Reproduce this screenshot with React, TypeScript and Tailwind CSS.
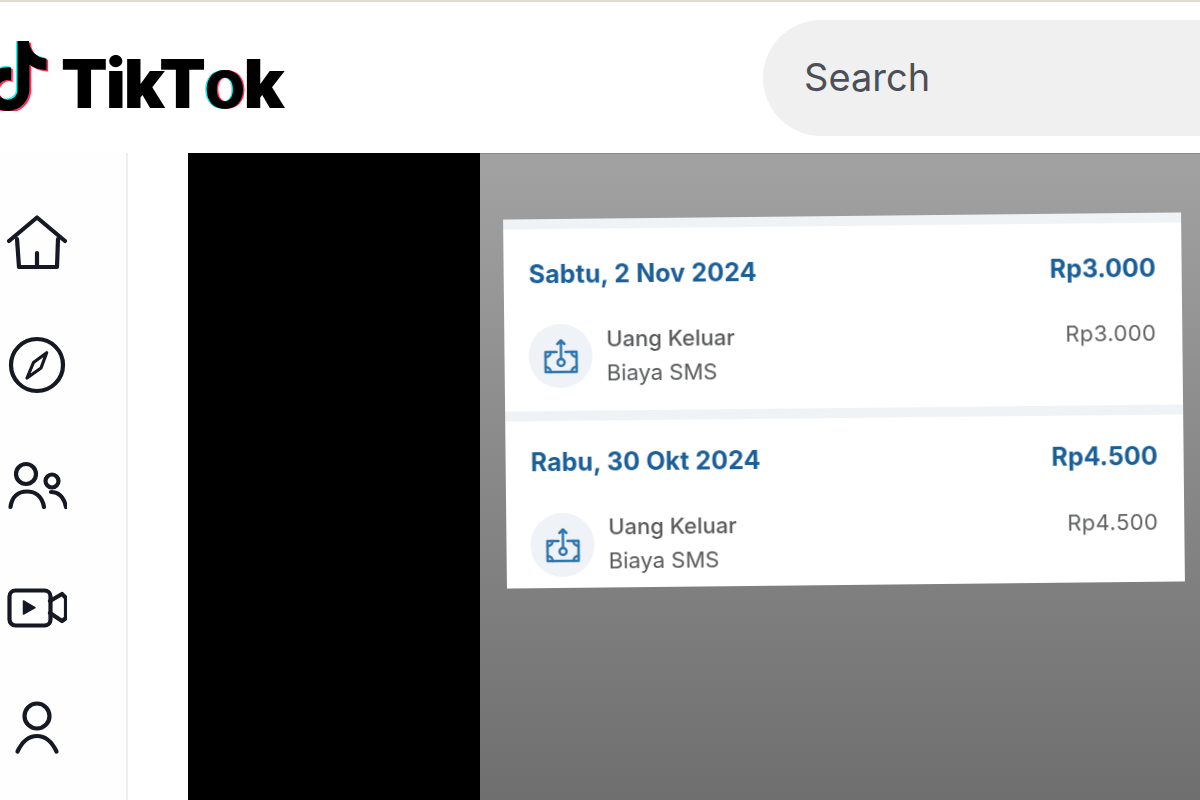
const notePath =
  'M12.525.02c1.31-.02 2.61-.01 3.91-.02.08 1.53.63 3.09 1.75 4.17 1.12 1.11 2.7 1.62 4.24 1.79v4.03c-1.44-.05-2.89-.35-4.2-.97-.57-.26-1.1-.59-1.62-.93-.01 2.92.01 5.84-.02 8.75-.08 1.4-.54 2.79-1.35 3.94-1.31 1.92-3.58 3.17-5.91 3.21-1.43.08-2.86-.31-4.08-1.03-2.02-1.19-3.44-3.37-3.65-5.71-.02-.5-.03-1-.01-1.49.18-1.9 1.12-3.72 2.58-4.96 1.66-1.44 3.98-2.13 6.15-1.72.02 1.48-.04 2.96-.04 4.44-.99-.32-2.15-.23-3.02.37-.63.41-1.11 1.04-1.36 1.75-.21.51-.15 1.07-.14 1.61.24 1.64 1.82 3.02 3.5 2.87 1.12-.01 2.19-.66 2.77-1.61.19-.33.4-.67.41-1.06.1-1.79.06-3.57.07-5.36.01-4.03-.01-8.05.02-12.07z';

function Logo() {
  return (
    <div className="flex items-center h-[149px] blur-[0.5px]">
      <svg className="w-[70px] h-[70px] -ml-[19px] -mt-[1px] shrink-0" viewBox="0 0 24 24">
        <path d={notePath} fill="#25f4ee" transform="translate(-0.5 -0.4)" />
        <path d={notePath} fill="#fe2c55" transform="translate(0.6 0.5)" />
        <path d={notePath} fill="#000000" />
      </svg>
      <span className="ml-[10px] mt-[13px] font-black text-[68px] leading-none tracking-[-2px] text-black">
        TikT
        <span className="font-bold [text-shadow:1.5px_0_0_#fe2c55,-1.5px_0_0_#25f4ee]">o</span>k
      </span>
    </div>
  );
}

function NavIcon({ children }: { children: React.ReactNode }) {
  return (
    <div className="h-[121px] flex items-center pl-[7px]">
      <svg
        className="w-[60px] h-[60px]"
        viewBox="0 0 60 60"
        fill="none"
        stroke="#161823"
        strokeWidth={4.2}
        strokeLinecap="round"
        strokeLinejoin="round"
      >
        {children}
      </svg>
    </div>
  );
}

function Sidebar() {
  return (
    <div className="w-[128px] shrink-0 border-r-2 border-[#eeeeee] pt-[30px] bg-[#fefefe]">
      <NavIcon>
        <path d="M2 27 30 3.5 58 27" />
        <path d="M10 25 12 53H50L51 25" />
        <path d="M30 39V53" />
      </NavIcon>
      <NavIcon>
        <circle cx="30" cy="30" r="26" />
        <path d="M39.7 17.7 34 33 20 43 26.5 27.5Z" strokeWidth={3.2} />
      </NavIcon>
      <NavIcon>
        <circle cx="19" cy="18" r="10" />
        <circle cx="45" cy="25" r="6.5" />
        <path d="M3.5 51C5 40 12 35.5 20 35.5S35 40 37 51" />
        <path d="M44 36C52 36 57 42 59 51" />
      </NavIcon>
      <NavIcon>
        <rect x="2.5" y="13.5" width="41" height="35" rx="6" />
        <path d="M43 24 55 17 59 21V41L55 44 43 36" />
        <path d="M16.5 24V37L28 30.7Z" fill="#161823" strokeWidth={1.5} />
      </NavIcon>
      <NavIcon>
        <circle cx="30" cy="18" r="12.5" />
        <path d="M10.5 53.5C15 44 22 38 30 38S45 44 49.5 53.5" />
      </NavIcon>
    </div>
  );
}

function MoneyIcon() {
  return (
    <svg
      className="w-[64px] h-[64px]"
      viewBox="0 0 64 64"
      fill="none"
      stroke="#2f76ad"
      strokeWidth={2.5}
      strokeLinecap="round"
      strokeLinejoin="round"
    >
      <path d="M28 28H17V48H48V28H37" />
      <path d="M32.5 35V17" />
      <path d="M29 20 32.5 16.5 36 20" />
      <circle cx="32.5" cy="38.5" r="3.5" />
      <path d="M17 33C20 33 22 31 22 28M48 33C45 33 43 31 43 28M17 43C20 43 22 45 22 48M48 43C45 43 43 45 43 48" />
    </svg>
  );
}

function Section({ date, amount, tight }: { date: string; amount: string; tight?: boolean }) {
  return (
    <div className={tight ? 'pl-[24px] pr-[26px] pt-[27px] pb-[10px]' : 'pl-[24px] pr-[26px] pt-[31px] pb-[21px]'}>
      <div className="flex justify-between items-center h-[30px] text-[25px] font-bold text-[#1b5f98]">
        <span className="ml-[1px] tracking-[0.1px]">{date}</span>
        <span>{amount}</span>
      </div>
      <div className={tight ? 'flex mt-[35px]' : 'flex mt-[34px]'}>
        <div className="w-[64px] h-[64px] rounded-full bg-[#eff2f6] shrink-0">
          <MoneyIcon />
        </div>
        <div className={tight ? 'ml-[14px] -mt-[3px] text-[22px] leading-[34px] text-[#585a5c]' : 'ml-[14px] -mt-[2px] text-[22px] leading-[34px] text-[#585a5c]'}>
          <div className="font-medium">Uang Keluar</div>
          <div>Biaya SMS</div>
        </div>
        <div className="ml-auto -mt-[2px] text-[22px] leading-[34px] tracking-[0.4px] text-[#5f6163]">{amount}</div>
      </div>
    </div>
  );
}

export default function App() {
  return (
    <div className="h-screen w-full overflow-hidden bg-white flex flex-col font-['Inter',sans-serif]">
      <div className="h-[2px] bg-[#e3ddcf] shrink-0" />
      <div className="h-[151px] shrink-0 flex items-start overflow-hidden">
        <div className="w-[763px] shrink-0">
          <Logo />
        </div>
        <div className="mt-[18px] w-[700px] h-[116px] shrink-0 rounded-full bg-[#f0f0f0] flex items-center pl-[41px] pb-[2px] text-[38px] text-[#4b4f5a]">
          Search
        </div>
      </div>
      <div className="flex-1 flex min-h-0">
        <Sidebar />
        <div className="w-[60px] shrink-0 bg-white" />
        <div className="w-[292px] shrink-0 bg-black" />
        <div className="flex-1 bg-gradient-to-b from-[#a2a2a2] to-[#6f6f6f] pl-[25px] pt-[62px] border-t border-[#888888]">
          <div className="w-[678px] bg-white -rotate-[0.6deg] blur-[0.4px]">
            <div className="h-[10px] bg-[#f0f3f6]" />
            <Section date="Sabtu, 2 Nov 2024" amount="Rp3.000" />
            <div className="h-[10px] bg-[#f0f3f6]" />
            <Section date="Rabu, 30 Okt 2024" amount="Rp4.500" tight />
          </div>
        </div>
      </div>
    </div>
  );
}
